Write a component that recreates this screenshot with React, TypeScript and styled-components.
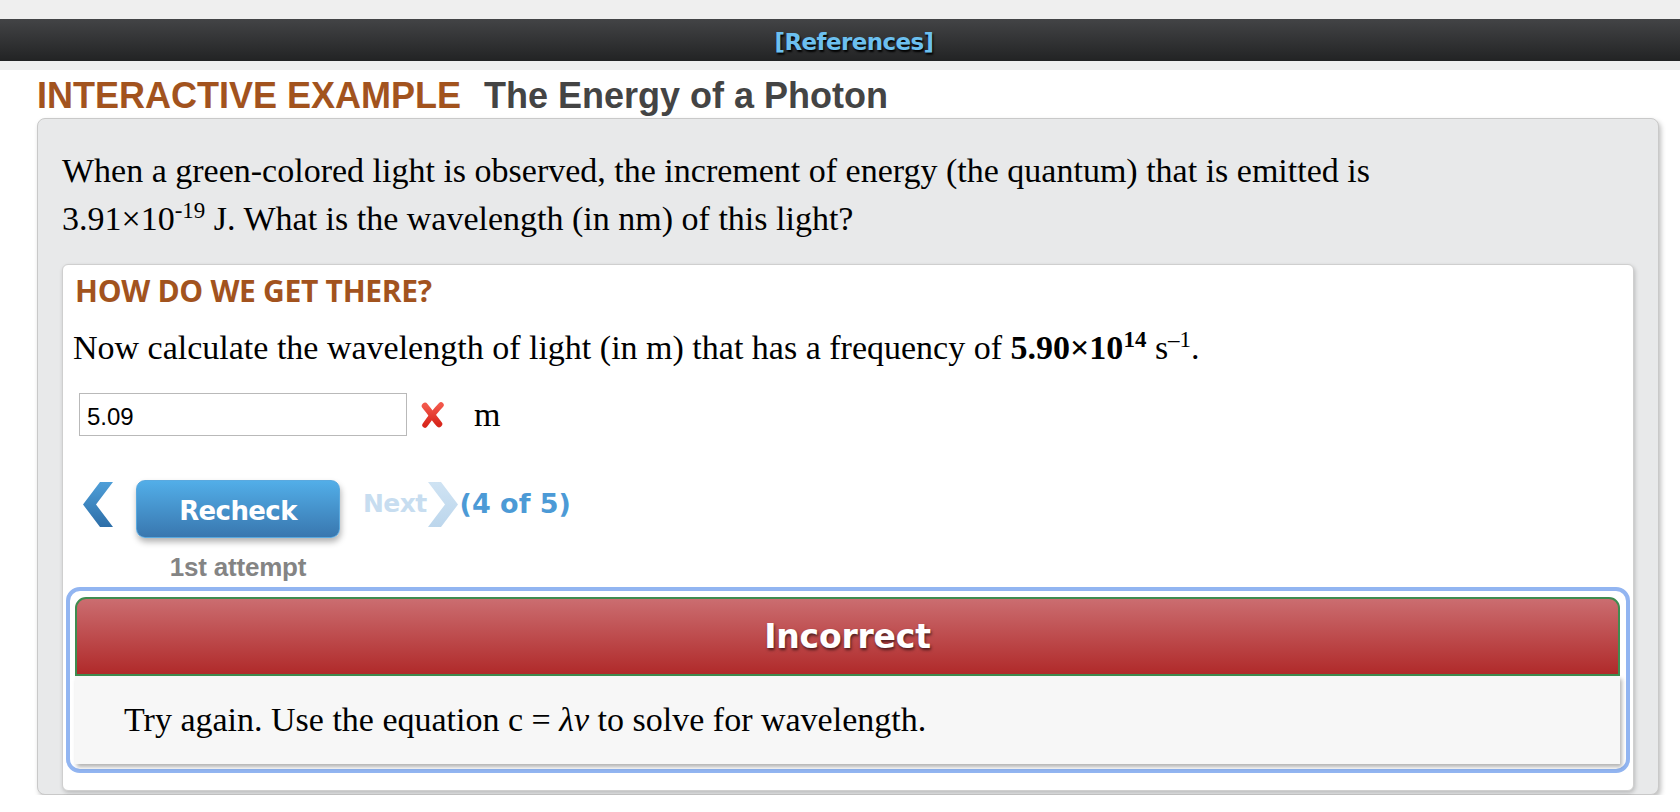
import React from 'react';
import styled, { createGlobalStyle } from 'styled-components';

const GlobalStyle = createGlobalStyle`
  html, body {
    margin: 0;
    padding: 0;
    background: #ffffff;
    font-family: "Liberation Serif", "Times New Roman", serif;
  }
`;

const ORANGE = '#a2531e';

const Chevron = ({ dir, light }: { dir: 'left' | 'right'; light?: boolean }) => {
  const id = `chev-${dir}`;
  const points = dir === 'left'
    ? '30,0 17,0 0,22.5 17,45 30,45 13,22.5'
    : '0,0 13,0 30,22.5 13,45 0,45 17,22.5';
  return (
    <svg width="30" height="45" viewBox="0 0 30 45">
      <defs>
        <linearGradient id={id} x1="0" y1="0" x2="0" y2="1">
          <stop offset="0" stopColor={light ? '#cfe3f3' : '#4f9fd8'} />
          <stop offset="1" stopColor={light ? '#bcd6ec' : '#2d6ea8'} />
        </linearGradient>
      </defs>
      <polygon points={points} fill={`url(#${id})`} />
    </svg>
  );
};

const WrongMark = () => (
  <svg width="26" height="26" viewBox="0 0 26 26">
    <defs>
      <linearGradient id="xmark" x1="0" y1="0" x2="0" y2="1">
        <stop offset="0" stopColor="#f2574a" />
        <stop offset="1" stopColor="#d8261c" />
      </linearGradient>
    </defs>
    <path d="M6 4 C 11 10, 15 16, 20 22" stroke="url(#xmark)" strokeWidth="6.5" strokeLinecap="round" fill="none" />
    <path d="M22 3 C 16 9, 11 16, 6 23" stroke="url(#xmark)" strokeWidth="5.5" strokeLinecap="round" fill="none" />
  </svg>
);

const App = () => {
  return (
    <>
      <GlobalStyle />
      <Header>
        <RefBar>
          <RefLink>[References]</RefLink>
        </RefBar>
      </Header>
      <Content>
        <TitleRow>
          <Kicker>INTERACTIVE EXAMPLE</Kicker>
          <Title>The Energy of a Photon</Title>
        </TitleRow>
        <OuterPanel>
          <Question>
            When a green-colored light is observed, the increment of energy (the quantum) that is emitted is
            <br />
            3.91×10<sup>-19</sup> J. What is the wavelength (in nm) of this light?
          </Question>
          <StepPanel>
            <StepHeading>HOW DO WE GET THERE?</StepHeading>
            <Prompt>
              Now calculate the wavelength of light (in m) that has a frequency of <b>5.90×10<sup>14</sup></b> s<sup>–1</sup>.
            </Prompt>
            <AnswerRow>
              <AnswerInput defaultValue="5.09" />
              <WrongMark />
              <Unit>m</Unit>
            </AnswerRow>
            <NavRow>
              <ChevronSlot><Chevron dir="left" /></ChevronSlot>
              <CheckColumn>
                <RecheckButton>Recheck</RecheckButton>
                <Attempt>1st attempt</Attempt>
              </CheckColumn>
              <NavText muted>Next</NavText>
              <ChevronSlot><Chevron dir="right" light /></ChevronSlot>
              <NavText>(4 of 5)</NavText>
            </NavRow>
            <FeedbackFrame>
              <FeedbackHeader>Incorrect</FeedbackHeader>
              <FeedbackBody>
                <span>Try again. Use the equation c = <i>λν</i> to solve for wavelength.</span>
              </FeedbackBody>
            </FeedbackFrame>
          </StepPanel>
        </OuterPanel>
      </Content>
    </>
  );
};

const Header = styled.div`
  background: #efefef;
  padding: 19px 0 9px;
`;

const RefBar = styled.div`
  height: 42px;
  display: flex;
  align-items: center;
  justify-content: center;
  padding-left: 28px;
  background: linear-gradient(#434446, #222324);
`;

const RefLink = styled.span`
  font-family: "DejaVu Sans", Verdana, sans-serif;
  font-weight: bold;
  font-size: 23px;
  letter-spacing: -0.6px;
  padding-top: 4px;
  color: #6cc0f0;
  text-shadow: 1px 2px 2px #000;
`;

const Content = styled.div`
  padding: 0 21px 0 37px;
`;

const TitleRow = styled.div`
  display: flex;
  align-items: baseline;
  gap: 23px;
  margin-top: 5px;
  height: 43px;
  font-family: "Liberation Sans", Arial, sans-serif;
  font-weight: bold;
  font-size: 36px;
  line-height: 41px;
`;

const Kicker = styled.span`
  color: ${ORANGE};
`;

const Title = styled.span`
  color: #444;
`;

const OuterPanel = styled.div`
  background: #e8e9ea;
  border: 1px solid #c9c9c9;
  border-radius: 8px;
  box-shadow: 2px 3px 5px rgba(0, 0, 0, 0.25);
  padding: 28px 24px 3px 24px;
`;

const Question = styled.p`
  margin: 0 0 21px;
  font-size: 34px;
  line-height: 48px;
  color: #000;

  sup {
    font-size: 23px;
    line-height: 0;
  }
`;

const StepPanel = styled.div`
  background: #fff;
  border: 1px solid #cfcfcf;
  border-radius: 6px;
  box-shadow: 1px 2px 4px rgba(0, 0, 0, 0.2);
  padding: 8px 1px 17px 12px;
`;

const StepHeading = styled.div`
  font-family: "Open Sans", sans-serif;
  font-weight: 700;
  font-size: 30px;
  line-height: 36px;
  letter-spacing: -0.3px;
  color: ${ORANGE};
`;

const Prompt = styled.p`
  margin: 19px 0 0 -2px;
  font-size: 34px;
  line-height: 40px;
  color: #000;

  sup {
    font-size: 23px;
    line-height: 0;
  }
`;

const AnswerRow = styled.div`
  display: flex;
  align-items: center;
  margin: 25px 0 0 4px;
`;

const AnswerInput = styled.input`
  box-sizing: border-box;
  width: 328px;
  height: 43px;
  border: 1px solid #b9b9b9;
  padding: 4px 7px 0;
  font-family: "Liberation Sans", Arial, sans-serif;
  font-size: 24px;
  color: #000;
  margin-right: 12px;
  outline: none;
`;

const Unit = styled.span`
  margin-left: 29px;
  font-size: 34px;
`;

const NavRow = styled.div`
  display: flex;
  align-items: flex-start;
  margin: 44px 0 0 8px;
`;

const ChevronSlot = styled.div`
  padding-top: 2px;
  height: 45px;
  margin-right: 2px;
`;

const CheckColumn = styled.div`
  display: flex;
  flex-direction: column;
  align-items: center;
  margin: 0 23px 0 21px;
`;

const RecheckButton = styled.button`
  width: 204px;
  height: 58px;
  border: 1px solid #5aa9df;
  border-radius: 9px;
  background: linear-gradient(#52aee8, #3977af);
  box-shadow: 1px 4px 6px rgba(0, 0, 0, 0.3);
  color: #fff;
  font-family: "DejaVu Sans", Verdana, sans-serif;
  font-weight: bold;
  font-size: 26px;
  letter-spacing: -0.6px;
  padding-top: 4px;
  cursor: pointer;
`;

const Attempt = styled.div`
  margin-top: 14px;
  font-family: "Liberation Sans", Arial, sans-serif;
  font-weight: bold;
  font-size: 26px;
  line-height: 30px;
  color: #848484;
  letter-spacing: -0.2px;
`;

const NavText = styled.span<{ muted?: boolean }>`
  font-family: "DejaVu Sans", Verdana, sans-serif;
  font-weight: bold;
  font-size: ${({ muted }) => (muted ? '25px' : '27px')};
  line-height: 48px;
  letter-spacing: ${({ muted }) => (muted ? '-0.6px' : '0')};
  color: ${({ muted }) => (muted ? '#c7ddf0' : '#4c9ad6')};
  margin-right: 1px;
`;

const FeedbackFrame = styled.div`
  margin: 5px 2px 0 -9px;
  border: 4px solid #92b5f1;
  border-radius: 14px;
  padding: 6px 6px 5px 5px;
`;

const FeedbackHeader = styled.div`
  height: 75px;
  display: flex;
  align-items: center;
  justify-content: center;
  border: 2px solid #3f8c50;
  border-radius: 11px 11px 0 0;
  background: linear-gradient(#cb6d70, #b02a2a);
  color: #fff;
  font-family: "DejaVu Sans", Verdana, sans-serif;
  font-weight: bold;
  font-size: 33px;
  letter-spacing: -0.2px;
  text-shadow: 1px 2px 3px rgba(0, 0, 0, 0.6);
`;

const FeedbackBody = styled.div`
  height: 88px;
  display: flex;
  align-items: center;
  padding-left: 49px;
  background: #f7f7f7;
  box-shadow: 2px 3px 4px rgba(0, 0, 0, 0.3);
  font-size: 34px;
  color: #000;

  i {
    font-style: italic;
  }
`;

export default App;
